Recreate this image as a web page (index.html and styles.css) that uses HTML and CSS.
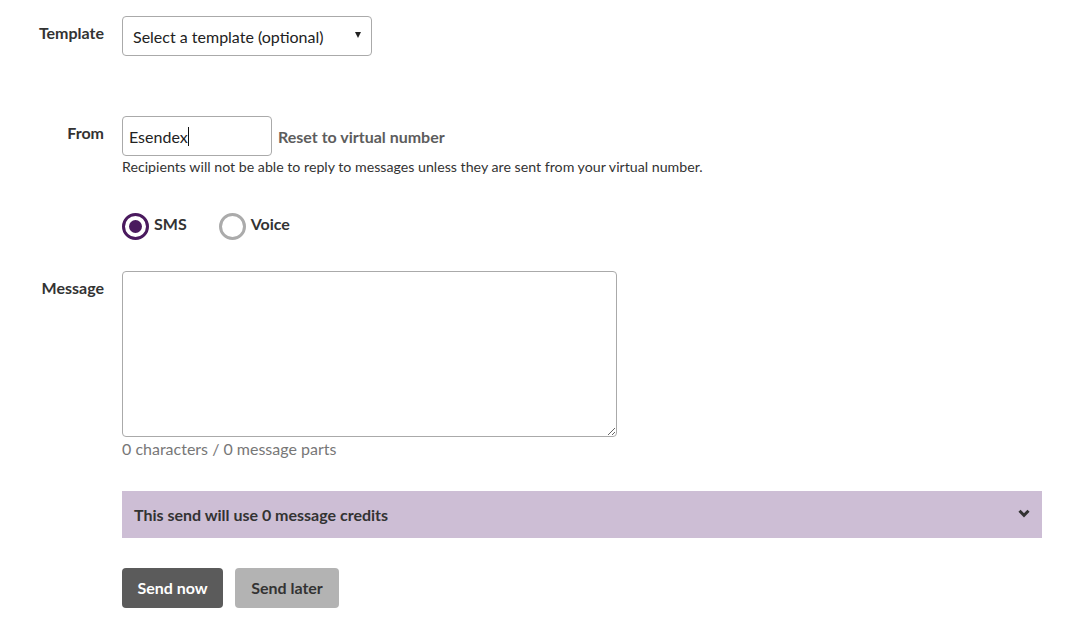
FILE: index.html
```html
<!DOCTYPE html>
<html lang="en">
<head>
<meta charset="utf-8">
<title>Send message</title>
<link rel="stylesheet" href="styles.css">
</head>
<body>
<form class="form">
  <div class="row row-template">
    <label class="label">Template</label>
    <div class="field">
      <div class="select">
        <span>Select a template (optional)</span>
        <span class="caret-down"></span>
      </div>
    </div>
  </div>

  <div class="row row-from">
    <label class="label">From</label>
    <div class="field">
      <div class="from-line">
        <div class="input"><span>Esendex</span><span class="text-caret"></span></div>
        <a class="reset-link">Reset to virtual number</a>
      </div>
      <p class="help">Recipients will not be able to reply to messages unless they are sent from your virtual number.</p>
    </div>
  </div>

  <div class="row row-radios">
    <span class="label"></span>
    <div class="field radios">
      <label class="radio"><span class="dot checked"></span><span class="radio-text">SMS</span></label>
      <label class="radio"><span class="dot"></span><span class="radio-text">Voice</span></label>
    </div>
  </div>

  <div class="row row-message">
    <label class="label">Message</label>
    <div class="field">
      <textarea class="textarea"></textarea>
      <div class="counter">0 characters / 0 message parts</div>
    </div>
  </div>

  <div class="row row-credits">
    <span class="label"></span>
    <div class="field">
      <div class="credits">
        <span>This send will use 0 message credits</span>
        <svg class="chevron" width="12" height="9" viewBox="0 0 12 9"><polyline points="1.5,1.8 6,6.3 10.5,1.8" fill="none" stroke="#333" stroke-width="3"/></svg>
      </div>
    </div>
  </div>

  <div class="row row-buttons">
    <span class="label"></span>
    <div class="field buttons">
      <button type="button" class="btn btn-primary">Send now</button>
      <button type="button" class="btn btn-secondary">Send later</button>
    </div>
  </div>
</form>
</body>
</html>
```

FILE: styles.css
```css
html, body {
  margin: 0;
  padding: 0;
  background: #fff;
}
body {
  font-family: Lato, "Open Sans", "Liberation Sans", sans-serif;
  color: #333;
  font-size: 16px;
}
.form {
  padding-top: 16px;
}
.row {
  display: grid;
  grid-template-columns: 104px 920px;
  column-gap: 18px;
}
.label {
  text-align: right;
  font-weight: 700;
  font-size: 16px;
  line-height: 20px;
  padding-top: 7px;
  color: #333;
}
.field {
  min-width: 0;
}

/* template select */
.select {
  box-sizing: border-box;
  width: 250px;
  height: 40px;
  border: 1px solid #aaa;
  border-radius: 4px;
  display: flex;
  align-items: center;
  justify-content: space-between;
  padding: 0 10px 0 10px;
  color: #222;
  font-size: 16px;
}
.caret-down {
  width: 0;
  height: 0;
  border-left: 3px solid transparent;
  border-right: 3px solid transparent;
  border-top: 6px solid #222;
  margin-top: -3px;
}

/* from */
.row-from {
  margin-top: 60px;
}
.from-line {
  display: flex;
  align-items: center;
}
.input {
  box-sizing: border-box;
  width: 150px;
  height: 40px;
  border: 1px solid #aaa;
  border-radius: 4px;
  display: flex;
  align-items: center;
  padding: 0 6px 0 6px;
  color: #222;
  font-size: 16px;
}
.text-caret {
  display: inline-block;
  width: 1px;
  height: 19px;
  background: #111;
}
.reset-link {
  margin-left: 6px;
  font-weight: 700;
  color: #5d5d5d;
}
.help {
  margin: 3px 0 0 0;
  font-size: 14.2px;
  line-height: 16px;
  color: #333;
}

/* radios */
.row-radios {
  margin-top: 38px;
}
.radios {
  display: flex;
  align-items: center;
  gap: 32px;
  height: 27px;
}
.radio {
  display: flex;
  align-items: center;
  gap: 5px;
  font-weight: 700;
  font-size: 16px;
  color: #333;
  line-height: 20px;
}
.radio-text {
  position: relative;
  top: -3px;
}
.radio .dot {
  box-sizing: border-box;
  width: 27px;
  height: 27px;
  border-radius: 50%;
  border: 3px solid #ababab;
  background: #fff;
  position: relative;
}
.radio .dot.checked {
  border-color: #4a1a5e;
}
.radio .dot.checked::after {
  content: "";
  position: absolute;
  left: 4px;
  top: 4px;
  width: 13px;
  height: 13px;
  border-radius: 50%;
  background: #4a1a5e;
}

/* message */
.row-message {
  margin-top: 31px;
}
.textarea {
  box-sizing: border-box;
  display: block;
  width: 495px;
  height: 166px;
  border: 1px solid #aaa;
  border-radius: 4px;
  margin: 0;
  font-family: inherit;
  resize: both;
}
.counter {
  margin-top: 2px;
  font-size: 16px;
  line-height: 20px;
  color: #777;
}

/* credits */
.row-credits {
  margin-top: 32px;
}
.credits {
  box-sizing: border-box;
  width: 920px;
  height: 47px;
  background: #cdbed5;
  display: flex;
  align-items: center;
  justify-content: space-between;
  padding: 0 12px 0 12px;
  font-weight: 700;
  font-size: 16px;
  color: #333;
}
.chevron {
  display: block;
  margin-top: -3px;
}

/* buttons */
.row-buttons {
  margin-top: 30px;
}
.buttons {
  display: flex;
  gap: 12px;
}
.btn {
  height: 40px;
  border: 0;
  border-radius: 4px;
  font-family: inherit;
  font-weight: 700;
  font-size: 16px;
  padding: 0 0 2px 0;
  cursor: pointer;
}
.btn-primary {
  background: #5b5b5b;
  color: #fff;
  width: 101px;
}
.btn-secondary {
  background: #b3b3b3;
  color: #333;
  width: 104px;
}
```
